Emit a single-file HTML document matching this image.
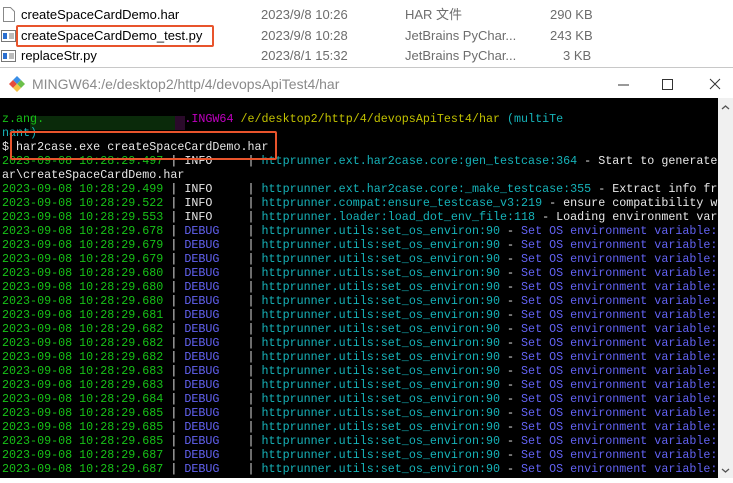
<!DOCTYPE html>
<html><head><meta charset="utf-8"><style>
*{margin:0;padding:0;box-sizing:border-box}
body{width:733px;height:480px;overflow:hidden;background:#fff;position:relative;font-family:"Liberation Sans","Noto Sans CJK SC",sans-serif}
.ex{position:absolute;left:0;top:0;width:733px;height:67px;background:#fff;font-size:13px;color:#000}
.row{position:absolute;height:20px;line-height:20px;white-space:nowrap}
.g{color:#6d6d6d}
.term{position:absolute;left:0;top:67px;width:733px;height:413px;background:#fff;border-top:1px solid #c8c8c8}
.title{position:absolute;left:32px;top:8px;font-size:14px;color:#8a8a8a}
.blk{position:absolute;left:0;top:30px;width:718px;height:380px;background:#000}
.sb{position:absolute;left:718px;top:30px;width:15px;height:380px;background:#f0f0f0}
pre{position:absolute;left:2px;top:44px;width:716px;overflow:hidden;font-family:"Liberation Mono",monospace;font-size:11.7px;line-height:14px;color:#e6e6e6;white-space:pre}
.G{color:#17c217}.C{color:#16b3b9}.B{color:#6262f2}.Y{color:#c0c000}.M{color:#c000c0}.W{color:#e8e8e8}
.box{position:absolute;border:2px solid #e8542c;border-radius:2px}
</style></head><body>
<div class="ex">
 <div style="position:absolute;left:3px;top:-9px;width:10px;height:5px;background:#ddd"></div>
 <svg style="position:absolute;left:3px;top:7px" width="12" height="15"><path d="M.5 .5h7l4 4v10h-11z" fill="#fff" stroke="#888"/></svg>
 <div class="row" style="left:21px;top:5px">createSpaceCardDemo.har</div>
 <div class="row g" style="left:261px;top:5px">2023/9/8 10:26</div>
 <div class="row g" style="left:405px;top:5px">HAR 文件</div>
 <div class="row g" style="left:550px;top:5px">290 KB</div>
 <svg style="position:absolute;left:1px;top:30px" width="15" height="12"><rect x=".5" y=".5" width="14" height="11" fill="#fff" stroke="#777"/><rect x="2" y="3" width="4" height="6" fill="#2b6fd0"/><path d="M8 4h5M8 6h5M8 8h5" stroke="#777"/></svg>
 <div class="row" style="left:21px;top:26px">createSpaceCardDemo_test.py</div>
 <div class="row g" style="left:261px;top:26px">2023/9/8 10:28</div>
 <div class="row g" style="left:405px;top:26px">JetBrains PyChar...</div>
 <div class="row g" style="left:550px;top:26px">243 KB</div>
 <svg style="position:absolute;left:1px;top:50px" width="15" height="12"><rect x=".5" y=".5" width="14" height="11" fill="#fff" stroke="#777"/><rect x="2" y="3" width="4" height="6" fill="#2b6fd0"/><path d="M8 4h5M8 6h5M8 8h5" stroke="#777"/></svg>
 <div class="row" style="left:21px;top:46px">replaceStr.py</div>
 <div class="row g" style="left:261px;top:46px">2023/8/1 15:32</div>
 <div class="row g" style="left:405px;top:46px">JetBrains PyChar...</div>
 <div class="row g" style="left:563px;top:46px">3 KB</div>
</div>
<div class="box" style="left:16px;top:25px;width:198px;height:22px"></div>
<div class="term">
 <svg style="position:absolute;left:9px;top:8px" width="16" height="16"><path d="M8 0l4 4-4 4-4-4z" fill="#3a8ee6"/><path d="M12 4l4 4-4 4-4-4z" fill="#6cc04a"/><path d="M4 4l4 4-4 4-4-4z" fill="#e74c3c"/><path d="M8 8l4 4-4 4-4-4z" fill="#f5c242"/></svg>
 <div class="title">MINGW64:/e/desktop2/http/4/devopsApiTest4/har</div>
 <svg style="position:absolute;left:615px;top:8px" width="115" height="18"><path d="M3 9h11" stroke="#333"/><rect x="47.5" y="3.5" width="10" height="10" fill="none" stroke="#333"/><path d="M95 3l10 10M105 3l-10 10" stroke="#333"/></svg>
 <div class="blk"></div>
 <div class="sb"><svg width="15" height="380"><path d="M4 11l3.5-3 3.5 3" fill="none" stroke="#555" stroke-width="1.3"/><path d="M4 371l3.5 3 3.5-3" fill="none" stroke="#555" stroke-width="1.3"/></svg></div>
 <div style="position:absolute;left:30px;top:48px;width:145px;height:14px;background:#0a2a0a"></div>
 <div style="position:absolute;left:175px;top:48px;width:10px;height:14px;background:#2a0a2a"></div>
<pre><span class="G">z.ang.                    </span><span class="M">.INGW64</span> <span class="Y">/e/desktop2/http/4/devopsApiTest4/har</span> <span class="C">(multiTe</span>
<span class="C">nant)</span>
$ har2case.exe createSpaceCardDemo.har
<span class="G">2023-09-08 10:28:29.497</span> | <span class="W">INFO    </span> | <span class="C">httprunner.ext.har2case.core:gen_testcase:364</span> - <span class="W">Start to generate</span>
ar\createSpaceCardDemo.har
<span class="G">2023-09-08 10:28:29.499</span> | <span class="W">INFO    </span> | <span class="C">httprunner.ext.har2case.core:_make_testcase:355</span> - <span class="W">Extract info fr</span>
<span class="G">2023-09-08 10:28:29.522</span> | <span class="W">INFO    </span> | <span class="C">httprunner.compat:ensure_testcase_v3:219</span> - <span class="W">ensure compatibility w</span>
<span class="G">2023-09-08 10:28:29.553</span> | <span class="W">INFO    </span> | <span class="C">httprunner.loader:load_dot_env_file:118</span> - <span class="W">Loading environment var</span>
<span class="G">2023-09-08 10:28:29.678</span> | <span class="B">DEBUG   </span> | <span class="C">httprunner.utils:set_os_environ:90</span> - <span class="B">Set OS environment variable:</span>
<span class="G">2023-09-08 10:28:29.679</span> | <span class="B">DEBUG   </span> | <span class="C">httprunner.utils:set_os_environ:90</span> - <span class="B">Set OS environment variable:</span>
<span class="G">2023-09-08 10:28:29.679</span> | <span class="B">DEBUG   </span> | <span class="C">httprunner.utils:set_os_environ:90</span> - <span class="B">Set OS environment variable:</span>
<span class="G">2023-09-08 10:28:29.680</span> | <span class="B">DEBUG   </span> | <span class="C">httprunner.utils:set_os_environ:90</span> - <span class="B">Set OS environment variable:</span>
<span class="G">2023-09-08 10:28:29.680</span> | <span class="B">DEBUG   </span> | <span class="C">httprunner.utils:set_os_environ:90</span> - <span class="B">Set OS environment variable:</span>
<span class="G">2023-09-08 10:28:29.680</span> | <span class="B">DEBUG   </span> | <span class="C">httprunner.utils:set_os_environ:90</span> - <span class="B">Set OS environment variable:</span>
<span class="G">2023-09-08 10:28:29.681</span> | <span class="B">DEBUG   </span> | <span class="C">httprunner.utils:set_os_environ:90</span> - <span class="B">Set OS environment variable:</span>
<span class="G">2023-09-08 10:28:29.682</span> | <span class="B">DEBUG   </span> | <span class="C">httprunner.utils:set_os_environ:90</span> - <span class="B">Set OS environment variable:</span>
<span class="G">2023-09-08 10:28:29.682</span> | <span class="B">DEBUG   </span> | <span class="C">httprunner.utils:set_os_environ:90</span> - <span class="B">Set OS environment variable:</span>
<span class="G">2023-09-08 10:28:29.682</span> | <span class="B">DEBUG   </span> | <span class="C">httprunner.utils:set_os_environ:90</span> - <span class="B">Set OS environment variable:</span>
<span class="G">2023-09-08 10:28:29.683</span> | <span class="B">DEBUG   </span> | <span class="C">httprunner.utils:set_os_environ:90</span> - <span class="B">Set OS environment variable:</span>
<span class="G">2023-09-08 10:28:29.683</span> | <span class="B">DEBUG   </span> | <span class="C">httprunner.utils:set_os_environ:90</span> - <span class="B">Set OS environment variable:</span>
<span class="G">2023-09-08 10:28:29.684</span> | <span class="B">DEBUG   </span> | <span class="C">httprunner.utils:set_os_environ:90</span> - <span class="B">Set OS environment variable:</span>
<span class="G">2023-09-08 10:28:29.685</span> | <span class="B">DEBUG   </span> | <span class="C">httprunner.utils:set_os_environ:90</span> - <span class="B">Set OS environment variable:</span>
<span class="G">2023-09-08 10:28:29.685</span> | <span class="B">DEBUG   </span> | <span class="C">httprunner.utils:set_os_environ:90</span> - <span class="B">Set OS environment variable:</span>
<span class="G">2023-09-08 10:28:29.685</span> | <span class="B">DEBUG   </span> | <span class="C">httprunner.utils:set_os_environ:90</span> - <span class="B">Set OS environment variable:</span>
<span class="G">2023-09-08 10:28:29.687</span> | <span class="B">DEBUG   </span> | <span class="C">httprunner.utils:set_os_environ:90</span> - <span class="B">Set OS environment variable:</span>
<span class="G">2023-09-08 10:28:29.687</span> | <span class="B">DEBUG   </span> | <span class="C">httprunner.utils:set_os_environ:90</span> - <span class="B">Set OS environment variable:</span></pre>
</div>
<div class="box" style="left:10px;top:131px;width:267px;height:29px"></div>
</body></html>
